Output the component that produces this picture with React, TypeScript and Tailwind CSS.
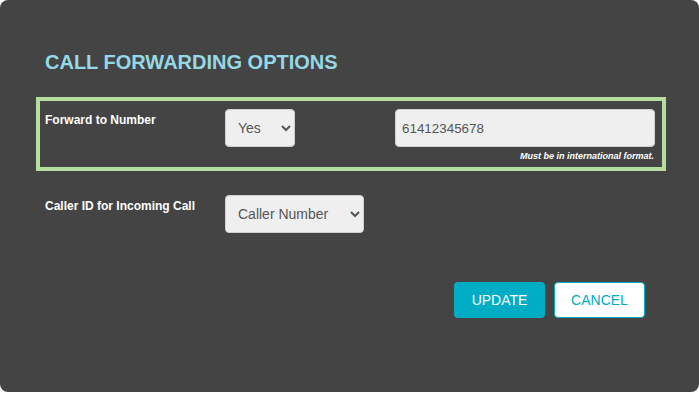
import React from 'react';

export default function App() {
  return (
    <div className="w-[699px] h-[394px] bg-white font-['Liberation_Sans',Arial,sans-serif]">
      <div className="w-[699px] h-[392px] rounded-[8px] bg-[#444444] pl-[36px] pr-[33px] pt-[52px]">
        {/* Title */}
        <h2 className="pl-[9px] text-[20px] leading-[20px] font-bold text-[#95d9e6]">
          CALL FORWARDING OPTIONS
        </h2>

        {/* Forward to Number */}
        <div className="mt-[25px] border-4 border-[#b4dd9e] pl-[5px] pr-[7px] pt-[8px] pb-[6px]">
          <div className="flex items-start">
            <label className="w-[180px] mt-[4px] text-[12px] leading-[14px] font-bold text-white">
              Forward to Number
            </label>
            <select
              defaultValue="Yes"
              className="w-[70px] h-[38px] pl-[8px] rounded-[4px] border border-[#cfcfcf] bg-[#efefef] text-[14px] text-[#555]"
            >
              <option>Yes</option>
              <option>No</option>
            </select>
            <div className="ml-auto w-[260px] flex flex-col items-end">
              <input
                defaultValue="61412345678"
                className="w-[260px] h-[38px] px-[6px] rounded-[4px] border border-[#cfcfcf] bg-[#efefef] text-[13.4px] text-[#555] outline-none"
              />
              <span className="mt-[4px] pr-[1px] text-[9px] leading-[10px] font-bold italic text-white">
                Must be in international format.
              </span>
            </div>
          </div>
        </div>

        {/* Caller ID */}
        <div className="mt-[24px] flex items-start pl-[9px]">
          <label className="w-[180px] mt-[4px] text-[12px] leading-[14px] font-bold text-white">
            Caller ID for Incoming Call
          </label>
          <select
            defaultValue="Caller Number"
            className="w-[139px] h-[38px] pl-[8px] rounded-[4px] border border-[#cfcfcf] bg-[#efefef] text-[14px] text-[#555]"
          >
            <option>Caller Number</option>
            <option>Forwarding Number</option>
          </select>
        </div>

        {/* Actions */}
        <div className="mt-[49px] flex justify-end gap-[9px] pr-[21px]">
          <button className="w-[91px] h-[36px] rounded-[4px] bg-[#00adc4] text-[14px] text-white">
            UPDATE
          </button>
          <button className="w-[91px] h-[36px] rounded-[4px] border border-[#00adc4] bg-white text-[14px] text-[#00adc4]">
            CANCEL
          </button>
        </div>
      </div>
    </div>
  );
}
